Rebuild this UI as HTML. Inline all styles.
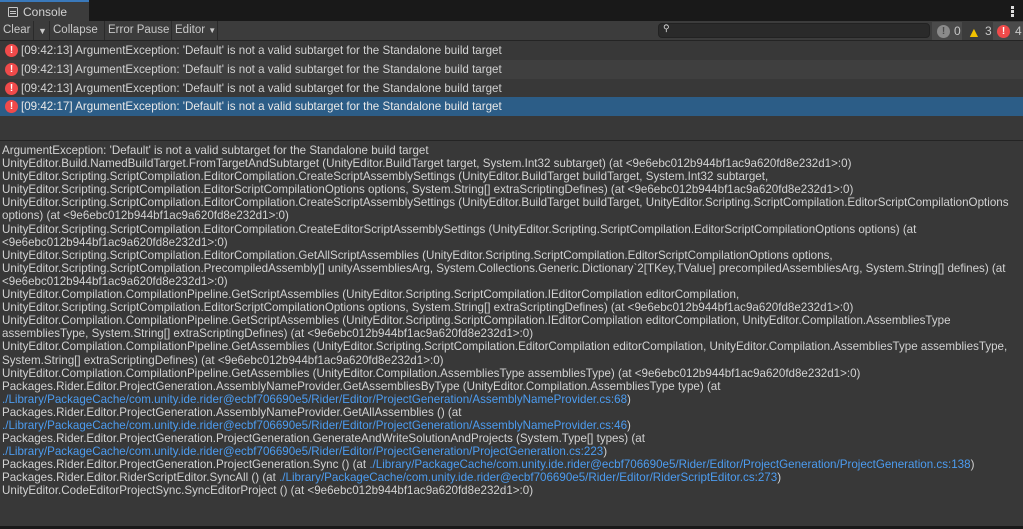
<!DOCTYPE html>
<html><head><meta charset="utf-8"><style>
*{margin:0;padding:0;box-sizing:border-box}
body{width:1023px;height:529px;background:#383838;font-family:"Liberation Sans",sans-serif;font-size:12px;color:#d2d2d2;position:relative;overflow:hidden}
.top{position:absolute;left:0;top:0;width:1023px;height:21px;background:#191919}
.tab{position:absolute;left:0;top:0;width:89px;height:21px;background:#3c3c3c;border-top:2px solid #3a79bb;color:#d2d2d2;font-size:12px;padding:3px 0 0 23px}
.tabicon{position:absolute;left:8px;top:5px;width:10px;height:10px;border:1.5px solid #c8c8c8;border-radius:1px}
.tabicon:after{content:"";position:absolute;left:1px;right:1px;top:3px;height:1px;background:#c8c8c8;box-shadow:0 2px 0 #c8c8c8}
.dots{position:absolute;left:1011px;top:6px;width:3px;height:3px;background:#ddd;box-shadow:0 4px 0 #ddd,0 8px 0 #ddd}
.tb{position:absolute;left:0;top:21px;width:1023px;height:20px;background:#3c3c3c;border-bottom:1px solid #242424}
.btn{position:absolute;top:0;height:19px;padding:3px 0 0 3px;font-size:11.5px;color:#c8c8c8;border-right:1px solid #2a2a2a;white-space:nowrap;overflow:hidden}
.search{position:absolute;left:658px;top:2px;width:272px;height:15px;background:#2a2a2a;border:1px solid #222;border-radius:4px}
.cnt{position:absolute;top:1px;height:18px;background:#4a4a4a;font-size:12px;color:#c8c8c8;padding:2px 0 0 22px}
.row{position:absolute;left:0;width:1023px;height:19px;font-size:11.6px;padding:3px 0 0 21px;white-space:nowrap}
.err{position:absolute;left:5px;top:3px;width:13px;height:13px;border-radius:50%;background:#f04a4a;color:#fff;font-weight:bold;font-size:10px;text-align:center;line-height:13px}
.det{position:absolute;left:2px;top:144px;line-height:13.1px;font-size:11.6px;white-space:nowrap;color:#d2d2d2}
a{color:#4c9cf0;text-decoration:none}
</style></head><body>
<div class="top"></div>
<div class="tab"><div class="tabicon"></div>Console</div>
<div class="dots"></div>
<div class="tb">
<div class="btn" style="left:0;width:34px">Clear</div>
<div class="btn" style="left:34px;width:16px;padding-left:4px;font-size:9px;padding-top:5px">▼</div>
<div class="btn" style="left:50px;width:55px">Collapse</div>
<div class="btn" style="left:105px;width:67px">Error Pause</div>
<div class="btn" style="left:172px;width:46px">Editor <span style="font-size:8px">▼</span></div>
<div class="search"><span style="position:absolute;left:4px;top:-1px;font-size:9px;color:#ddd">⚲</span></div>
<div class="cnt" style="left:932px;width:30px"><span style="position:absolute;left:5px;top:3px;width:13px;height:13px;border-radius:50%;background:#8a8a8a;color:#4a4a4a;font-size:10px;font-weight:bold;text-align:center;line-height:13px">!</span>0</div>
<div class="cnt" style="left:963px;width:29px;background:#3c3c3c"><span style="position:absolute;left:4px;top:2px;color:#f2c200;font-size:14px">▲</span>3</div>
<div class="cnt" style="left:993px;width:30px"><span class="err" style="left:4px;top:3px">!</span>4</div>
</div>
<div class="row" style="top:41px;background:#383838"><span class="err">!</span>[09:42:13] ArgumentException: 'Default' is not a valid subtarget for the Standalone build target</div>
<div class="row" style="top:60px;background:#3f3f3f"><span class="err">!</span>[09:42:13] ArgumentException: 'Default' is not a valid subtarget for the Standalone build target</div>
<div class="row" style="top:79px;background:#383838"><span class="err">!</span>[09:42:13] ArgumentException: 'Default' is not a valid subtarget for the Standalone build target</div>
<div class="row" style="top:97px;background:#2c5d87;color:#e8e8e8"><span class="err">!</span>[09:42:17] ArgumentException: 'Default' is not a valid subtarget for the Standalone build target</div>
<div style="position:absolute;left:0;top:140px;width:1023px;height:1px;background:#242424"></div>
<div class="det">
ArgumentException: 'Default' is not a valid subtarget for the Standalone build target<br>
UnityEditor.Build.NamedBuildTarget.FromTargetAndSubtarget (UnityEditor.BuildTarget target, System.Int32 subtarget) (at &lt;9e6ebc012b944bf1ac9a620fd8e232d1&gt;:0)<br>
UnityEditor.Scripting.ScriptCompilation.EditorCompilation.CreateScriptAssemblySettings (UnityEditor.BuildTarget buildTarget, System.Int32 subtarget,<br>
UnityEditor.Scripting.ScriptCompilation.EditorScriptCompilationOptions options, System.String[] extraScriptingDefines) (at &lt;9e6ebc012b944bf1ac9a620fd8e232d1&gt;:0)<br>
UnityEditor.Scripting.ScriptCompilation.EditorCompilation.CreateScriptAssemblySettings (UnityEditor.BuildTarget buildTarget, UnityEditor.Scripting.ScriptCompilation.EditorScriptCompilationOptions<br>
options) (at &lt;9e6ebc012b944bf1ac9a620fd8e232d1&gt;:0)<br>
UnityEditor.Scripting.ScriptCompilation.EditorCompilation.CreateEditorScriptAssemblySettings (UnityEditor.Scripting.ScriptCompilation.EditorScriptCompilationOptions options) (at<br>
&lt;9e6ebc012b944bf1ac9a620fd8e232d1&gt;:0)<br>
UnityEditor.Scripting.ScriptCompilation.EditorCompilation.GetAllScriptAssemblies (UnityEditor.Scripting.ScriptCompilation.EditorScriptCompilationOptions options,<br>
UnityEditor.Scripting.ScriptCompilation.PrecompiledAssembly[] unityAssembliesArg, System.Collections.Generic.Dictionary`2[TKey,TValue] precompiledAssembliesArg, System.String[] defines) (at<br>
&lt;9e6ebc012b944bf1ac9a620fd8e232d1&gt;:0)<br>
UnityEditor.Compilation.CompilationPipeline.GetScriptAssemblies (UnityEditor.Scripting.ScriptCompilation.IEditorCompilation editorCompilation,<br>
UnityEditor.Scripting.ScriptCompilation.EditorScriptCompilationOptions options, System.String[] extraScriptingDefines) (at &lt;9e6ebc012b944bf1ac9a620fd8e232d1&gt;:0)<br>
UnityEditor.Compilation.CompilationPipeline.GetScriptAssemblies (UnityEditor.Scripting.ScriptCompilation.IEditorCompilation editorCompilation, UnityEditor.Compilation.AssembliesType<br>
assembliesType, System.String[] extraScriptingDefines) (at &lt;9e6ebc012b944bf1ac9a620fd8e232d1&gt;:0)<br>
UnityEditor.Compilation.CompilationPipeline.GetAssemblies (UnityEditor.Scripting.ScriptCompilation.EditorCompilation editorCompilation, UnityEditor.Compilation.AssembliesType assembliesType,<br>
System.String[] extraScriptingDefines) (at &lt;9e6ebc012b944bf1ac9a620fd8e232d1&gt;:0)<br>
UnityEditor.Compilation.CompilationPipeline.GetAssemblies (UnityEditor.Compilation.AssembliesType assembliesType) (at &lt;9e6ebc012b944bf1ac9a620fd8e232d1&gt;:0)<br>
Packages.Rider.Editor.ProjectGeneration.AssemblyNameProvider.GetAssembliesByType (UnityEditor.Compilation.AssembliesType type) (at<br>
<a>./Library/PackageCache/com.unity.ide.rider@ecbf706690e5/Rider/Editor/ProjectGeneration/AssemblyNameProvider.cs:68</a>)<br>
Packages.Rider.Editor.ProjectGeneration.AssemblyNameProvider.GetAllAssemblies () (at<br>
<a>./Library/PackageCache/com.unity.ide.rider@ecbf706690e5/Rider/Editor/ProjectGeneration/AssemblyNameProvider.cs:46</a>)<br>
Packages.Rider.Editor.ProjectGeneration.ProjectGeneration.GenerateAndWriteSolutionAndProjects (System.Type[] types) (at<br>
<a>./Library/PackageCache/com.unity.ide.rider@ecbf706690e5/Rider/Editor/ProjectGeneration/ProjectGeneration.cs:223</a>)<br>
Packages.Rider.Editor.ProjectGeneration.ProjectGeneration.Sync () (at <a>./Library/PackageCache/com.unity.ide.rider@ecbf706690e5/Rider/Editor/ProjectGeneration/ProjectGeneration.cs:138</a>)<br>
Packages.Rider.Editor.RiderScriptEditor.SyncAll () (at <a>./Library/PackageCache/com.unity.ide.rider@ecbf706690e5/Rider/Editor/RiderScriptEditor.cs:273</a>)<br>
UnityEditor.CodeEditorProjectSync.SyncEditorProject () (at &lt;9e6ebc012b944bf1ac9a620fd8e232d1&gt;:0)
</div>
<div style="position:absolute;left:0;top:526px;width:1023px;height:3px;background:#191919"></div>
</body></html>
